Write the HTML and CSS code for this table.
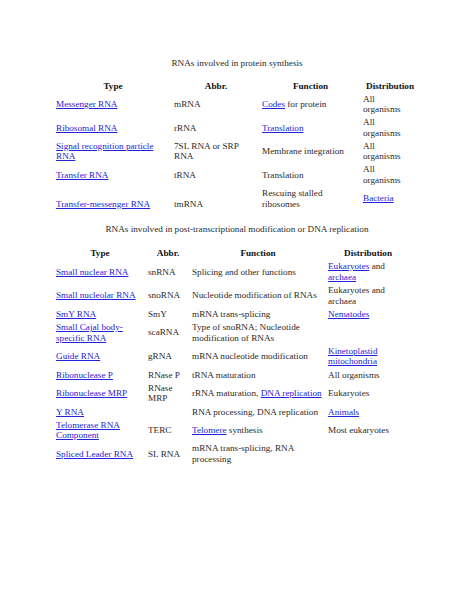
FILE: index.html
```html
<!DOCTYPE html>
<html>
<head>
<meta charset="utf-8">
<link rel="stylesheet" href="styles.css">
</head>
<body>
<div class="page">
  <p class="caption cap1">RNAs involved in protein synthesis</p>
  <table class="rna t1">
    <colgroup><col class="c1"><col class="c2"><col class="c3"><col class="c4"></colgroup>
    <tr><th>Type</th><th>Abbr.</th><th>Function</th><th>Distribution</th></tr>
    <tr><td><a href="#">Messenger RNA</a></td><td>mRNA</td><td><a href="#">Codes</a> for protein</td><td>All<br>organisms</td></tr>
    <tr><td><a href="#">Ribosomal RNA</a></td><td>rRNA</td><td><a href="#">Translation</a></td><td>All<br>organisms</td></tr>
    <tr><td><a href="#">Signal recognition particle<br>RNA</a></td><td>7SL RNA or SRP<br>RNA</td><td>Membrane integration</td><td>All<br>organisms</td></tr>
    <tr><td><a href="#">Transfer RNA</a></td><td>tRNA</td><td>Translation</td><td>All<br>organisms</td></tr>
    <tr><td class="bottom"><a href="#">Transfer-messenger RNA</a></td><td class="bottom">tmRNA</td><td>Rescuing stalled<br>ribosomes</td><td><a href="#">Bacteria</a></td></tr>
  </table>
  <p class="caption cap2">RNAs involved in post-transcriptional modification or DNA replication</p>
  <table class="rna t2">
    <colgroup><col class="c1"><col class="c2"><col class="c3"><col class="c4"></colgroup>
    <tr><th>Type</th><th>Abbr.</th><th>Function</th><th>Distribution</th></tr>
    <tr><td><a href="#">Small nuclear RNA</a></td><td>snRNA</td><td>Splicing and other functions</td><td><a href="#">Eukaryotes</a> and<br><a href="#">archaea</a></td></tr>
    <tr><td><a href="#">Small nucleolar RNA</a></td><td>snoRNA</td><td>Nucleotide modification of RNAs</td><td>Eukaryotes and<br>archaea</td></tr>
    <tr><td><a href="#">SmY RNA</a></td><td>SmY</td><td>mRNA trans-splicing</td><td><a href="#">Nematodes</a></td></tr>
    <tr><td><a href="#">Small Cajal body-<br>specific RNA</a></td><td>scaRNA</td><td>Type of snoRNA; Nucleotide<br>modification of RNAs</td><td></td></tr>
    <tr><td><a href="#">Guide RNA</a></td><td>gRNA</td><td>mRNA nucleotide modification</td><td><a href="#">Kinetoplastid<br>mitochondria</a></td></tr>
    <tr><td><a href="#">Ribonuclease P</a></td><td>RNase P</td><td>tRNA maturation</td><td>All organisms</td></tr>
    <tr><td><a href="#">Ribonuclease MRP</a></td><td>RNase<br>MRP</td><td>rRNA maturation, <a href="#">DNA replication</a></td><td>Eukaryotes</td></tr>
    <tr><td><a href="#">Y RNA</a></td><td></td><td>RNA processing, DNA replication</td><td><a href="#">Animals</a></td></tr>
    <tr><td><a href="#">Telomerase RNA<br>Component</a></td><td>TERC</td><td><a href="#">Telomere</a> synthesis</td><td>Most eukaryotes</td></tr>
    <tr><td><a href="#">Spliced Leader RNA</a></td><td>SL RNA</td><td>mRNA trans-splicing, RNA<br>processing</td><td></td></tr>
  </table>
</div>
</body>
</html>
```

FILE: styles.css
```css
html, body {
  margin: 0;
  padding: 0;
  background: #ffffff;
}

.page {
  width: 474px;
  height: 613px;
  font-family: "Liberation Serif", "Times New Roman", serif;
  font-size: 9.2px;
  line-height: 10.6px;
  color: #2a2a2a;
  overflow: hidden;
}

.caption {
  margin: 0;
  text-align: center;
  font-size: 9.2px;
  line-height: 10.6px;
}

.cap1 {
  padding-top: 57.5px;
}

.cap2 {
  padding-top: 13.5px;
}

.rna {
  border-collapse: collapse;
  table-layout: fixed;
  margin-left: 54px;
}

.t1 {
  margin-top: 11.5px;
  width: 365px;
}

.t2 {
  margin-top: 12.5px;
  width: 356px;
}

.t1 .c1 { width: 118px; }
.t1 .c2 { width: 88px; }
.t1 .c3 { width: 101px; }
.t1 .c4 { width: 58px; }

.t2 .c1 { width: 92px; }
.t2 .c2 { width: 44px; }
.t2 .c3 { width: 136px; }
.t2 .c4 { width: 84px; }

.rna th {
  font-weight: bold;
  color: #111111;
  text-align: center;
  padding: 1.2px 2px;
  white-space: nowrap;
}

.rna td {
  text-align: left;
  vertical-align: middle;
  padding: 1.2px 2px;
  white-space: nowrap;
}

.t2 td {
  padding: 1.3px 2px;
}

.rna td.bottom {
  vertical-align: bottom;
}

.rna a {
  color: #2323d8;
  text-decoration: underline;
}
```
